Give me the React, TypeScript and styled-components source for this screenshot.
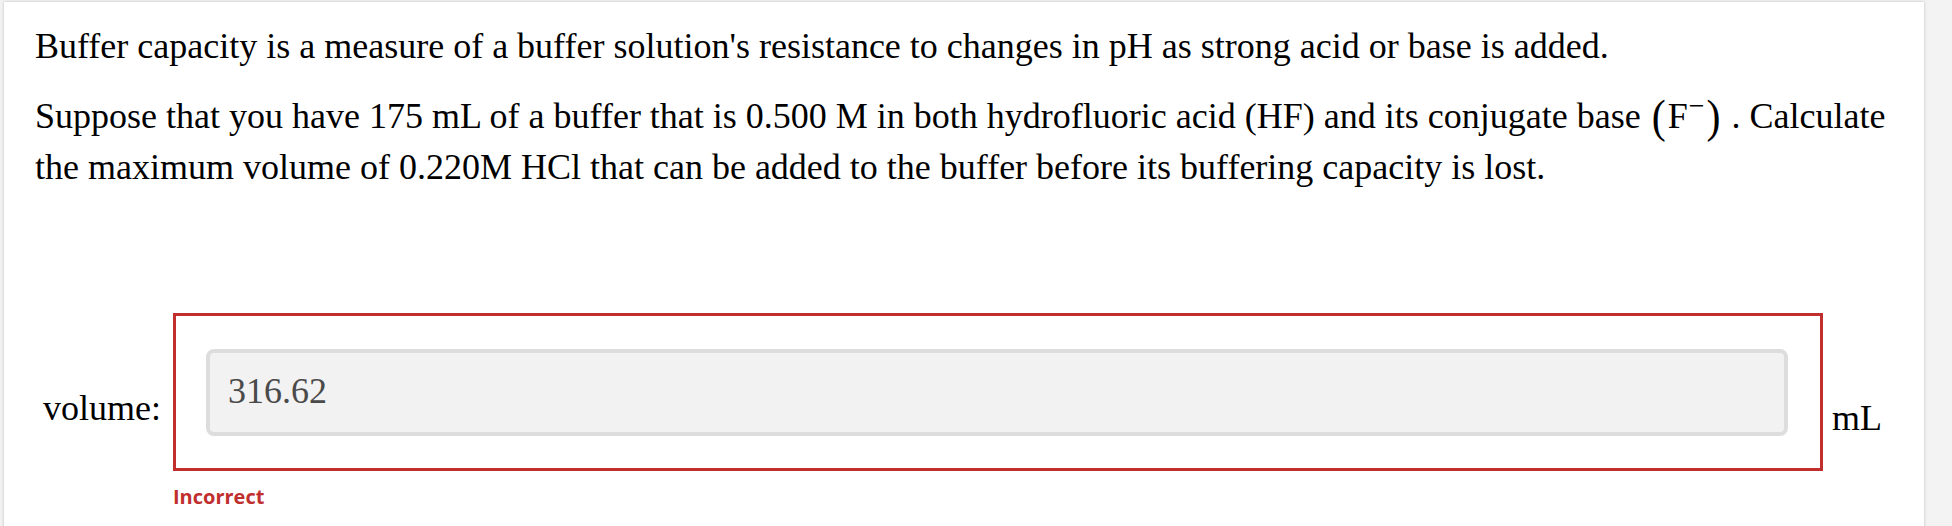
import styled, {createGlobalStyle} from 'styled-components'

const GlobalStyle = createGlobalStyle`
  html, body {
    margin: 0;
    padding: 0;
    background: #f3f3f3;
    overflow: hidden;
  }
`

const Card = styled.div`
  margin: 2px 28px 0 4px;
  min-height: 560px;
  background: #ffffff;
  box-shadow: 0 0 3px rgba(0, 0, 0, 0.22);
  padding: 19px 31px 0 31px;
  box-sizing: border-box;
  font-family: 'Liberation Serif', 'Times New Roman', serif;
  font-size: 36px;
  line-height: 51px;
  color: #000;
`

const Paragraph = styled.p`
  margin: 0 0 19px 0;
`

const MathGroup = styled.span`
  white-space: nowrap;
`

const Paren = styled.span`
  display: inline-block;
  font-size: 42px;
  line-height: 40px;
  transform: scaleY(1.12);
  vertical-align: -2px;
  margin: 0 2px;
`

const Sup = styled.span`
  display: inline-block;
  font-size: 28px;
  line-height: 0;
  vertical-align: 13px;
  margin-left: 1px;
`

const AnswerRow = styled.div`
  display: flex;
  align-items: flex-start;
  margin-top: 120px;
  padding-left: 8px;
`

const Label = styled.span<{$offset: number}>`
  margin-top: ${p => p.$offset}px;
  white-space: nowrap;
`

const Field = styled.div`
  flex: 1;
  display: flex;
  flex-direction: column;
  margin: 0 9px 0 12px;
`

const RedBox = styled.div`
  border: 3px solid #c02f2e;
  padding: 33px 32px 32px 30px;
`

const Input = styled.div`
  height: 87px;
  box-sizing: border-box;
  border: 4px solid #dddddd;
  border-radius: 8px;
  background: #f2f2f2;
  padding: 13px 18px;
  color: #4a4a4a;
  font-size: 36px;
  line-height: 51px;
`

const Feedback = styled.div`
  margin-top: 12px;
  font-family: 'Open Sans', 'Liberation Sans', sans-serif;
  font-weight: 700;
  font-size: 20px;
  line-height: 27px;
  color: #c02f2e;
`

const Unit = styled.span`
  margin-top: 80px;
  margin-right: 11px;
`

export default function App() {
  return (
    <>
      <GlobalStyle />
      <Card>
        <Paragraph>
          Buffer capacity is a measure of a buffer solution's resistance to changes in pH as
          strong acid or base is added.
        </Paragraph>
        <Paragraph>
          Suppose that you have 175 mL of a buffer that is 0.500 M in both hydrofluoric acid (HF)
          and its conjugate base{' '}
          <MathGroup>
            <Paren>(</Paren>F<Sup>−</Sup>
            <Paren>)</Paren>
          </MathGroup>{' '}
          . Calculate the maximum volume of 0.220M HCl that can be added to the buffer before its
          buffering capacity is lost.
        </Paragraph>
        <AnswerRow>
          <Label $offset={70}>volume:</Label>
          <Field>
            <RedBox>
              <Input>316.62</Input>
            </RedBox>
            <Feedback>Incorrect</Feedback>
          </Field>
          <Unit>mL</Unit>
        </AnswerRow>
      </Card>
    </>
  )
}
